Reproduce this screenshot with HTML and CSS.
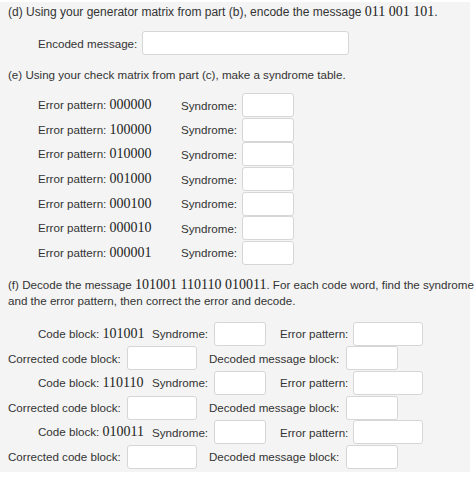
FILE: index.html
```html
<!DOCTYPE html>
<html>
<head>
<meta charset="utf-8">
<link rel="stylesheet" href="styles.css">
</head>
<body>
<div class="panel">
  <p class="q q-d">(d) Using your generator matrix from part (b), encode the message <span class="m">011 001 101</span>.</p>
  <div class="enc"><span class="enc-lbl">Encoded message:</span><span class="box enc-box"></span></div>

  <p class="q q-e">(e) Using your check matrix from part (c), make a syndrome table.</p>
  <div class="table">
    <div class="trow"><span class="ep">Error pattern: <span class="m">000000</span></span><span class="syn">Syndrome:</span><span class="box bs"></span></div>
    <div class="trow"><span class="ep">Error pattern: <span class="m">100000</span></span><span class="syn">Syndrome:</span><span class="box bs"></span></div>
    <div class="trow"><span class="ep">Error pattern: <span class="m">010000</span></span><span class="syn">Syndrome:</span><span class="box bs"></span></div>
    <div class="trow"><span class="ep">Error pattern: <span class="m">001000</span></span><span class="syn">Syndrome:</span><span class="box bs"></span></div>
    <div class="trow"><span class="ep">Error pattern: <span class="m">000100</span></span><span class="syn">Syndrome:</span><span class="box bs"></span></div>
    <div class="trow"><span class="ep">Error pattern: <span class="m">000010</span></span><span class="syn">Syndrome:</span><span class="box bs"></span></div>
    <div class="trow"><span class="ep">Error pattern: <span class="m">000001</span></span><span class="syn">Syndrome:</span><span class="box bs"></span></div>
  </div>

  <p class="q q-f">(f) Decode the message <span class="m">101001 110110 010011</span>. For each code word, find the syndrome<br>and the error pattern, then correct the error and decode.</p>
  <div class="blocks">
    <div class="crow"><span class="cb">Code block: <span class="m">101001</span></span><span class="csyn">Syndrome:</span><span class="box bs"></span><span class="cep">Error pattern:</span><span class="box bl"></span></div>
    <div class="crow"><span class="cor">Corrected code block:</span><span class="box bl"></span><span class="dec">Decoded message block:</span><span class="box bs"></span></div>
    <div class="crow"><span class="cb">Code block: <span class="m">110110</span></span><span class="csyn">Syndrome:</span><span class="box bs"></span><span class="cep">Error pattern:</span><span class="box bl"></span></div>
    <div class="crow"><span class="cor">Corrected code block:</span><span class="box bl"></span><span class="dec">Decoded message block:</span><span class="box bs"></span></div>
    <div class="crow"><span class="cb">Code block: <span class="m">010011</span></span><span class="csyn">Syndrome:</span><span class="box bs"></span><span class="cep">Error pattern:</span><span class="box bl"></span></div>
    <div class="crow"><span class="cor">Corrected code block:</span><span class="box bl"></span><span class="dec">Decoded message block:</span><span class="box bs"></span></div>
  </div>
</div>
</body>
</html>
```

FILE: styles.css
```css
html, body {
  margin: 0;
  padding: 0;
  background: #ffffff;
}
body {
  font-family: "Liberation Sans", Arial, sans-serif;
  font-size: 11.6px;
  color: #333333;
}
.panel {
  width: 470px;
  height: 470px;
  box-sizing: border-box;
  margin-top: 2px;
  padding: 2px 0 0 8px;
  background: #f4f4f4;
}
.q {
  margin: 0;
  line-height: 16px;
  white-space: nowrap;
}
.q-d { font-size: 12px; }
.m {
  font-family: "Liberation Serif", "Times New Roman", serif;
  font-size: 14px;
  color: #222222;
}
.box {
  display: inline-block;
  box-sizing: border-box;
  height: 24px;
  background: #ffffff;
  border: 1px solid #d6d6d6;
  border-radius: 3px;
}
.bs { width: 52px; }
.bl { width: 70px; }

.enc {
  display: flex;
  align-items: center;
  height: 24px;
  margin-top: 11px;
  padding-left: 30px;
}
.enc-lbl { width: 104px; }
.enc-box { width: 207px; }

.q-e { margin-top: 12px; }

.table {
  margin-top: 10px;
  padding-left: 30px;
}
.trow {
  display: flex;
  align-items: center;
  height: 24.6px;
}
.ep { width: 143px; }
.syn { width: 61px; }

.q-f { margin-top: 12px; }

.blocks { margin-top: 12px; }
.crow {
  display: flex;
  align-items: center;
  height: 24.7px;
}
.cb { width: 114px; padding-left: 30px; }
.csyn { width: 62px; }
.cep { width: 87px; padding-left: 14px; box-sizing: border-box; }
.cor { width: 119px; }
.dec { width: 149px; padding-left: 12px; box-sizing: border-box; }
```
